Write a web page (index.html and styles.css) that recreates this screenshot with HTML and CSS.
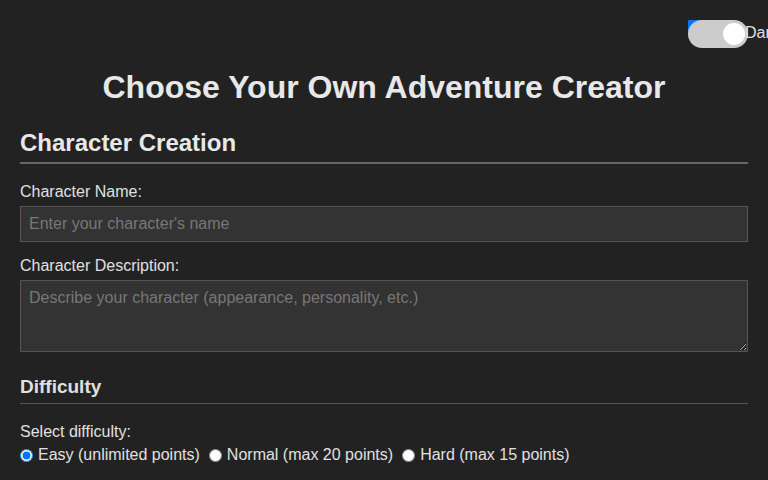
FILE: index.html
```html
<!DOCTYPE html>
<html lang="en">
<head>
<meta charset="utf-8">
<title>Choose Your Own Adventure Creator</title>
<link rel="stylesheet" href="styles.css">
</head>
<body>
<label class="theme-switch">
  <input type="checkbox" class="theme-check" checked>
  <span class="slider"></span>
  <span class="theme-text">Dark Mode</span>
</label>
<h1 class="title">Choose Your Own Adventure Creator</h1>
<section class="section">
  <h2 class="section-title">Character Creation</h2>
  <label class="field-label" for="name">Character Name:</label>
  <input class="text-input" id="name" type="text" placeholder="Enter your character's name">
  <label class="field-label desc-label" for="desc">Character Description:</label>
  <textarea class="text-area" id="desc" placeholder="Describe your character (appearance, personality, etc.)"></textarea>
  <h3 class="sub-title">Difficulty</h3>
  <div class="field-label select-label">Select difficulty:</div>
  <div class="radio-row">
    <label class="opt"><input type="radio" name="diff" checked>Easy (unlimited points)</label>
    <label class="opt"><input type="radio" name="diff">Normal (max 20 points)</label>
    <label class="opt"><input type="radio" name="diff">Hard (max 15 points)</label>
  </div>
</section>
</body>
</html>
```
FILE: styles.css
```css
html, body {
  margin: 0;
  background: #222222;
}
body {
  padding: 0 20px;
  color: #e0e0e0;
  font-family: "Liberation Sans", Arial, sans-serif;
  font-size: 16px;
  position: relative;
  overflow: hidden;
  height: 480px;
  box-sizing: border-box;
}
.theme-switch {
  position: absolute;
  top: 20px;
  left: 688px;
  width: 60px;
  height: 28px;
  display: block;
}
.theme-check {
  position: absolute;
  top: 0;
  left: 0;
  margin: 0;
  width: 13px;
  height: 13px;
}
.slider {
  position: absolute;
  top: 0;
  left: 0;
  width: 60px;
  height: 28px;
  background: #cccccc;
  border-radius: 14px;
}
.slider::after {
  content: "";
  position: absolute;
  width: 22px;
  height: 22px;
  border-radius: 50%;
  background: #ffffff;
  top: 3px;
  left: 35px;
}
.theme-text {
  position: absolute;
  left: 57px;
  top: 4px;
  white-space: nowrap;
  color: #e0e0e0;
}
.title {
  margin: 0;
  padding-top: 69px;
  text-align: center;
  font-size: 32px;
  line-height: 37px;
  color: #e8e8e8;
}
.section {
  display: flex;
  flex-direction: column;
}
.section-title {
  margin: 23px 0 0;
  font-size: 24px;
  line-height: 28px;
  padding-bottom: 5px;
  border-bottom: 2px solid #666666;
  color: #e8e8e8;
}
.field-label {
  display: block;
  margin-top: 19px;
  margin-bottom: 5px;
  line-height: 18px;
}
.desc-label {
  margin-top: 15px;
}
.text-input,
.text-area {
  box-sizing: border-box;
  width: 100%;
  background: #333333;
  border: 1px solid #555555;
  color: #e0e0e0;
  font-family: "Liberation Sans", Arial, sans-serif;
  font-size: 16px;
  padding: 8px;
  margin: 0;
  border-radius: 0;
}
.text-input {
  height: 36px;
}
.text-area {
  height: 72px;
  resize: vertical;
  display: block;
}
.text-input::placeholder,
.text-area::placeholder {
  color: #777777;
}
.sub-title {
  margin: 24px 0 0;
  font-size: 19px;
  line-height: 22px;
  padding-bottom: 5px;
  border-bottom: 1px solid #555555;
  color: #e0e0e0;
}
.select-label {
  margin-top: 19px;
  margin-bottom: 5px;
}
.radio-row {
  display: flex;
  line-height: 18px;
}
.opt {
  display: flex;
  align-items: center;
  margin-right: 9px;
}
.opt input {
  margin: 0 5px 0 0;
  width: 13px;
  height: 13px;
}
```
